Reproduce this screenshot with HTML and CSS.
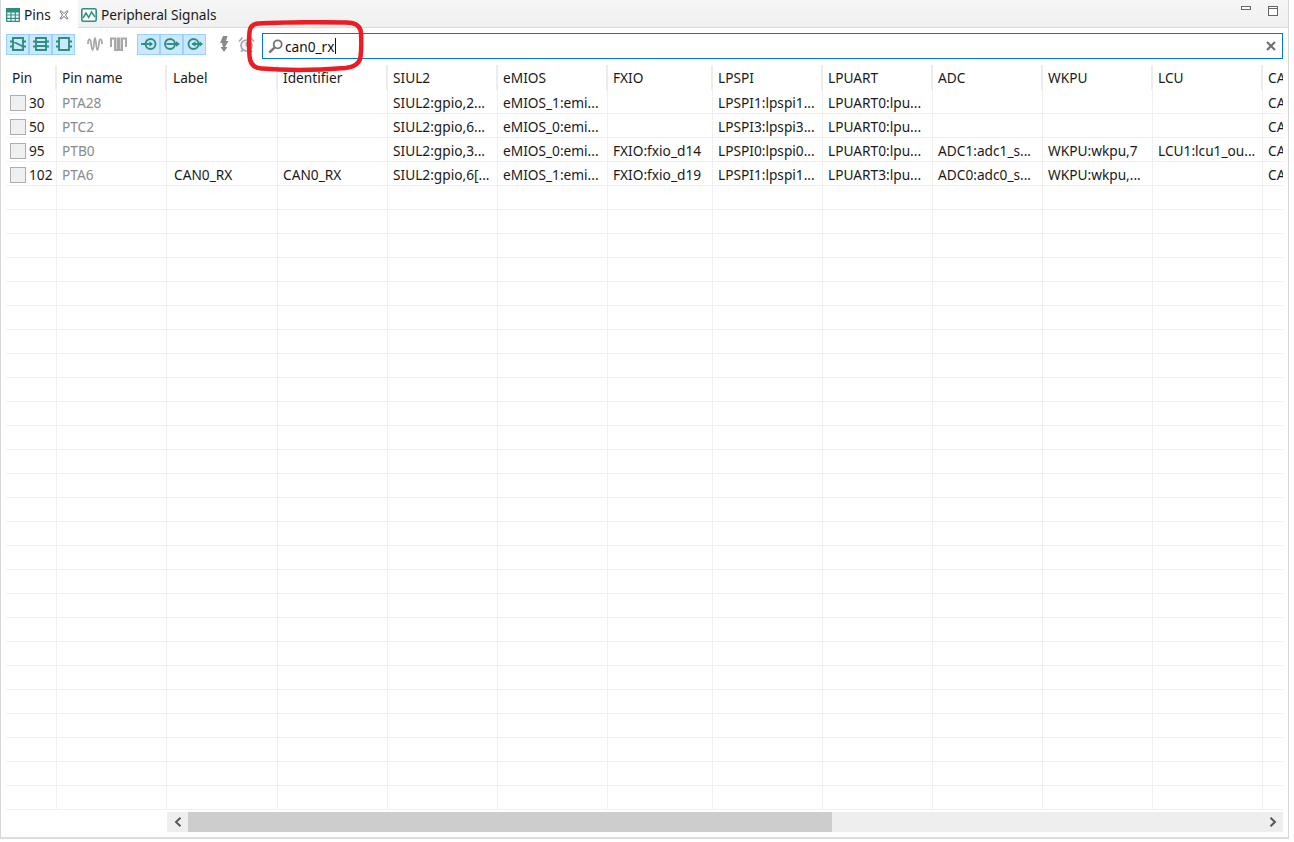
FILE: index.html
```html
<!DOCTYPE html>
<html lang="en">
<head>
<meta charset="utf-8">
<title>Pins</title>
<link rel="stylesheet" href="styles.css">
</head>
<body>
<div class="panel">
  <div class="tabstrip">
    <div class="tab tab-active">
      <svg class="tabicon" viewBox="0 0 14 14"><path d="M.7.7h12.600v12.600H.7z" fill="#fff" stroke="#2f8f7f" stroke-width="1.300"/><path d="M.7.7h12.600v3.300H.7z" fill="#2f8f7f" stroke="#2f8f7f"/><path d="M.7 7h12.600M.7 10.300h12.600M5 4v9.300M9.300 4v9.300" stroke="#2f8f7f" stroke-width="1.200" fill="none"/></svg>
      <span>Pins</span>
      <svg class="tabclose" viewBox="0 0 10 10"><path d="M1 1.500 2 .8 5 3.500 8 .8 9 1.500 6.500 5 9 8.500 8 9.200 5 6.500 2 9.200 1 8.500 3.500 5z" fill="#fff" stroke="#666" stroke-width=".9"/></svg>
    </div>
    <div class="tab">
      <svg class="tabicon tabicon-wide" viewBox="0 0 16 14"><rect x=".8" y=".8" width="14.400" height="12.400" rx="1.500" fill="#fff" stroke="#2f8f7f" stroke-width="1.600"/><path d="M2 10 5 5l2.700 4.500L10.500 4l3.500 5" fill="none" stroke="#2f8f7f" stroke-width="1.500"/></svg>
      <span>Peripheral Signals</span>
    </div>
    <div class="winbtns">
      <svg class="minbtn" viewBox="0 0 10 5"><rect x=".5" y=".5" width="9" height="3" fill="#fff" stroke="#666"/></svg>
      <svg class="maxbtn" viewBox="0 0 10 10"><rect x=".5" y=".5" width="9" height="9" fill="#fff" stroke="#666"/><path d="M.5 2.500h9" stroke="#666"/></svg>
    </div>
  </div>

  <div class="toolbar">
    <div class="toggles">
      <button class="toggle"><svg viewBox="0 0 16 14"><path d="M3 1h10v12H3zM0 4.500h3M0 9.500h3M13 4.500h3M13 9.500h3M3 4.500 13 9.500" fill="none" stroke="#2f8f7f" stroke-width="1.900"/></svg></button>
      <button class="toggle"><svg viewBox="0 0 16 14"><path d="M3 1h10v12H3zM0 4.500h3M0 9.500h3M13 4.500h3M13 9.500h3M3 5h10M3 9h10" fill="none" stroke="#2f8f7f" stroke-width="1.900"/></svg></button>
      <button class="toggle"><svg viewBox="0 0 16 14"><path d="M3 1h10v12H3zM0 4.500h3M0 9.500h3M13 4.500h3M13 9.500h3" fill="none" stroke="#2f8f7f" stroke-width="1.900"/></svg></button>
    </div>
    <svg class="wave" viewBox="0 0 16 14"><path d="M1 7C1 1 3.500 1 4 6s.8 7 1.800 7S7 1 8 1s1.200 12 2.200 12S11.500 11 12 6s3-5 3 1" fill="none" stroke="#a8a8a8" stroke-width="1.800"/></svg>
    <svg class="wave wave-square" viewBox="0 0 17 14"><path d="M1 10V1.500h4V13h2.500V1.500h2V13H12V1.500h4v8.500" fill="none" stroke="#a8a8a8" stroke-width="2"/></svg>
    <div class="toggles toggles-second">
      <button class="toggle"><svg viewBox="0 0 16 14"><circle cx="9.500" cy="7" r="5" fill="none" stroke="#2f8f7f" stroke-width="1.900"/><path d="M0 7h11" stroke="#2f8f7f" stroke-width="1.900"/><path d="M8.500 4.300 12 7 8.500 9.700z" fill="#2f8f7f"/></svg></button>
      <button class="toggle"><svg viewBox="0 0 16 14"><circle cx="6" cy="7" r="5" fill="none" stroke="#2f8f7f" stroke-width="1.900"/><path d="M2.500 7h10" stroke="#2f8f7f" stroke-width="1.900"/><path d="M12 4.300 16 7l-4 2.700z" fill="#2f8f7f"/></svg></button>
      <button class="toggle"><svg viewBox="0 0 16 14"><circle cx="6.500" cy="7" r="5" fill="none" stroke="#2f8f7f" stroke-width="1.900"/><path d="M5 7h10" stroke="#2f8f7f" stroke-width="1.900"/><path d="M8.500 4.300 4.500 7l4 2.700zM12.500 4.300 16 7l-3.500 2.700z" fill="#2f8f7f"/></svg></button>
    </div>
    <svg class="bolt" viewBox="0 0 10 16"><path d="M4 0h4.500L7 5h2.500L6 11h2.500L5 16l-3.500-5H4L3 7H1z" fill="#8a8a8a"/></svg>
    <svg class="alarm" viewBox="0 0 17 17"><circle cx="8.500" cy="9.500" r="5.500" fill="#f4f4f4" stroke="#a8a8a8" stroke-width="1.700"/><path d="M8.500 6v3.500l2 1.500M1 5.500l3.500-4M16 5.500l-3.500-4M4.500 14 3 16M12.500 14l1.500 2" fill="none" stroke="#a8a8a8" stroke-width="1.700"/></svg>
    <div class="search">
      <svg class="lens" viewBox="0 0 15 15"><circle cx="9.700" cy="5.300" r="4" fill="none" stroke="#777" stroke-width="1.800"/><path d="M6.700 8.300 1.300 13.700" stroke="#777" stroke-width="2.400"/></svg>
      <span class="query">can0_rx</span><span class="caret"></span>
      <svg class="clear" viewBox="0 0 10 10"><path d="M1 1l8 8M9 1 1 9" stroke="#6e6e6e" stroke-width="2"/></svg>
    </div>
  </div>

  <div class="tablewrap">
    <table class="pins">
      <colgroup>
        <col class="c-pin"><col class="c-w"><col class="c-x"><col class="c-w"><col class="c-w"><col class="c-w"><col class="c-n"><col class="c-w"><col class="c-w"><col class="c-w"><col class="c-w"><col class="c-w"><col class="c-end">
      </colgroup>
      <thead>
        <tr><th>Pin</th><th>Pin name</th><th>Label</th><th>Identifier</th><th>SIUL2</th><th>eMIOS</th><th>FXIO</th><th>LPSPI</th><th>LPUART</th><th>ADC</th><th>WKPU</th><th>LCU</th><th>CAN</th></tr>
      </thead>
      <tbody>
        <tr><td class="pin"><span class="check"></span>30</td><td class="name">PTA28</td><td></td><td></td><td>SIUL2:gpio,2...</td><td>eMIOS_1:emi...</td><td></td><td>LPSPI1:lpspi1...</td><td>LPUART0:lpu...</td><td></td><td></td><td></td><td>CAN</td></tr>
        <tr><td class="pin"><span class="check"></span>50</td><td class="name">PTC2</td><td></td><td></td><td>SIUL2:gpio,6...</td><td>eMIOS_0:emi...</td><td></td><td>LPSPI3:lpspi3...</td><td>LPUART0:lpu...</td><td></td><td></td><td></td><td>CAN</td></tr>
        <tr><td class="pin"><span class="check"></span>95</td><td class="name">PTB0</td><td></td><td></td><td>SIUL2:gpio,3...</td><td>eMIOS_0:emi...</td><td>FXIO:fxio_d14</td><td>LPSPI0:lpspi0...</td><td>LPUART0:lpu...</td><td>ADC1:adc1_s...</td><td>WKPU:wkpu,7</td><td>LCU1:lcu1_ou...</td><td>CAN</td></tr>
        <tr><td class="pin"><span class="check"></span>102</td><td class="name">PTA6</td><td class="label">CAN0_RX</td><td>CAN0_RX</td><td>SIUL2:gpio,6[...</td><td>eMIOS_1:emi...</td><td>FXIO:fxio_d19</td><td>LPSPI1:lpspi1...</td><td>LPUART3:lpu...</td><td>ADC0:adc0_s...</td><td>WKPU:wkpu,...</td><td></td><td>CAN</td></tr>
        <tr><td></td><td></td><td></td><td></td><td></td><td></td><td></td><td></td><td></td><td></td><td></td><td></td><td></td></tr>
        <tr><td></td><td></td><td></td><td></td><td></td><td></td><td></td><td></td><td></td><td></td><td></td><td></td><td></td></tr>
        <tr><td></td><td></td><td></td><td></td><td></td><td></td><td></td><td></td><td></td><td></td><td></td><td></td><td></td></tr>
        <tr><td></td><td></td><td></td><td></td><td></td><td></td><td></td><td></td><td></td><td></td><td></td><td></td><td></td></tr>
        <tr><td></td><td></td><td></td><td></td><td></td><td></td><td></td><td></td><td></td><td></td><td></td><td></td><td></td></tr>
        <tr><td></td><td></td><td></td><td></td><td></td><td></td><td></td><td></td><td></td><td></td><td></td><td></td><td></td></tr>
        <tr><td></td><td></td><td></td><td></td><td></td><td></td><td></td><td></td><td></td><td></td><td></td><td></td><td></td></tr>
        <tr><td></td><td></td><td></td><td></td><td></td><td></td><td></td><td></td><td></td><td></td><td></td><td></td><td></td></tr>
        <tr><td></td><td></td><td></td><td></td><td></td><td></td><td></td><td></td><td></td><td></td><td></td><td></td><td></td></tr>
        <tr><td></td><td></td><td></td><td></td><td></td><td></td><td></td><td></td><td></td><td></td><td></td><td></td><td></td></tr>
        <tr><td></td><td></td><td></td><td></td><td></td><td></td><td></td><td></td><td></td><td></td><td></td><td></td><td></td></tr>
        <tr><td></td><td></td><td></td><td></td><td></td><td></td><td></td><td></td><td></td><td></td><td></td><td></td><td></td></tr>
        <tr><td></td><td></td><td></td><td></td><td></td><td></td><td></td><td></td><td></td><td></td><td></td><td></td><td></td></tr>
        <tr><td></td><td></td><td></td><td></td><td></td><td></td><td></td><td></td><td></td><td></td><td></td><td></td><td></td></tr>
        <tr><td></td><td></td><td></td><td></td><td></td><td></td><td></td><td></td><td></td><td></td><td></td><td></td><td></td></tr>
        <tr><td></td><td></td><td></td><td></td><td></td><td></td><td></td><td></td><td></td><td></td><td></td><td></td><td></td></tr>
        <tr><td></td><td></td><td></td><td></td><td></td><td></td><td></td><td></td><td></td><td></td><td></td><td></td><td></td></tr>
        <tr><td></td><td></td><td></td><td></td><td></td><td></td><td></td><td></td><td></td><td></td><td></td><td></td><td></td></tr>
        <tr><td></td><td></td><td></td><td></td><td></td><td></td><td></td><td></td><td></td><td></td><td></td><td></td><td></td></tr>
        <tr><td></td><td></td><td></td><td></td><td></td><td></td><td></td><td></td><td></td><td></td><td></td><td></td><td></td></tr>
        <tr><td></td><td></td><td></td><td></td><td></td><td></td><td></td><td></td><td></td><td></td><td></td><td></td><td></td></tr>
        <tr><td></td><td></td><td></td><td></td><td></td><td></td><td></td><td></td><td></td><td></td><td></td><td></td><td></td></tr>
        <tr><td></td><td></td><td></td><td></td><td></td><td></td><td></td><td></td><td></td><td></td><td></td><td></td><td></td></tr>
        <tr><td></td><td></td><td></td><td></td><td></td><td></td><td></td><td></td><td></td><td></td><td></td><td></td><td></td></tr>
        <tr><td></td><td></td><td></td><td></td><td></td><td></td><td></td><td></td><td></td><td></td><td></td><td></td><td></td></tr>
        <tr><td></td><td></td><td></td><td></td><td></td><td></td><td></td><td></td><td></td><td></td><td></td><td></td><td></td></tr>
      </tbody>
    </table>
  </div>

  <div class="hscroll">
    <div class="arrow"><svg viewBox="0 0 8 10"><path d="M6.500 .8 2 5l4.500 4.200" fill="none" stroke="#555" stroke-width="1.900"/></svg></div>
    <div class="thumb"></div>
    <div class="arrow arrow-right"><svg viewBox="0 0 8 10"><path d="M1.500 .8 6 5 1.500 9.200" fill="none" stroke="#555" stroke-width="1.900"/></svg></div>
  </div>
</div>

<svg class="annotation" viewBox="0 0 120 54"><path d="M12 3.500C40 2 70 2 100 2.500c9 0 14.500 3 15 10.500.5 9 .5 17-.5 24-1 7-6 10-15 11-25 2-60 2.500-84 .5C8 48 4 44 3.500 36 3 27 3 18 3.500 12 4 6 7 4 12 3.500z" fill="none" stroke="#ed1c24" stroke-width="4.500"/></svg>
</body>
</html>
```
FILE: styles.css
```css
* { box-sizing: border-box; }
html, body { margin: 0; height: 100%; background: #fff; }
body {
  position: relative;
  font-family: "Noto Sans", "Open Sans", sans-serif;
  font-size: 13.7px;
  color: #1a1a1a;
  overflow: hidden;
}
.panel {
  width: 1289px;
  height: 839px;
  border-left: 1px solid #d8d8d8;
  border-right: 1px solid #d8d8d8;
  border-bottom: 2px solid #dcdcdc;
  display: flex;
  flex-direction: column;
  background: #fff;
}
.tabstrip {
  height: 28px;
  flex: none;
  display: flex;
  align-items: stretch;
  background: linear-gradient(#f6f6f6, #f0f0f0);
  border-bottom: 1px solid #dcdcdc;
}
.tab {
  display: flex;
  align-items: center;
  padding: 2px 0 0 5px;
  gap: 4px;
  line-height: 1;
}
.tab-active {
  width: 77px;
  background: #fff;
  height: 28px;
}
.tabicon { width: 14px; height: 14px; flex: none; }
.tabicon-wide { width: 16px; }
.tabclose { width: 10px; height: 10px; margin-left: 4px; flex: none; }
.tab-active + .tab { padding-left: 3px; gap: 4px; }
.winbtns {
  margin-left: auto;
  display: flex;
  align-items: flex-start;
  gap: 17px;
  padding: 6px 10px 0 0;
}
.minbtn { width: 10px; height: 5px; }
.maxbtn { width: 10px; height: 10px; }
.toolbar {
  height: 37px;
  flex: none;
  display: flex;
  align-items: center;
  padding: 0 5px 0 5px;
}
.toggles { display: flex; height: 21px; margin-top: -5px; }
.toggle {
  width: 23px;
  height: 21px;
  padding: 0;
  margin: 0;
  background: #cce8ff;
  border: 1px solid #99d1ff;
  display: flex;
  align-items: center;
  justify-content: center;
}
.toggle svg { width: 16px; height: 14px; }
.wave { width: 16px; height: 14px; margin: -5px 0 0 12px; flex: none; }
.wave-square { width: 17px; margin-left: 7px; }
.toggles-second { margin-left: 10px; }
.bolt { width: 10px; height: 16px; margin: -5px 0 0 13px; flex: none; }
.alarm { width: 17px; height: 17px; margin: -5px 0 0 9px; flex: none; }
.search {
  flex: 1;
  height: 26px;
  margin: -1px 0 0 7px;
  border: 1px solid #0078d7;
  display: flex;
  align-items: center;
  padding: 0 5px;
}
.lens { width: 15px; height: 15px; flex: none; }
.query { margin-left: 2px; color: #111; }
.caret { width: 1px; height: 16px; background: #111; }
.clear { width: 10px; height: 10px; margin-left: auto; margin-right: 1px; flex: none; }
.tablewrap {
  height: 745px;
  flex: none;
  padding-left: 5px;
  width: 1282px;
  overflow: hidden;
}
.pins {
  table-layout: fixed;
  border-collapse: separate;
  border-spacing: 0;
  width: 1277px;
}
.c-pin { width: 51px; }
.c-w { width: 110px; }
.c-x { width: 111px; }
.c-n { width: 105px; }
.c-end { width: 20px; }
th {
  height: 25px;
  padding: 0 0 0 5px;
  font-weight: 400;
  text-align: left;
  white-space: nowrap;
  overflow: hidden;
  border-right: 2px solid #ececec;
}
th:first-child { padding-left: 6px; }
th:nth-child(3) { padding-left: 6px; }
th:last-child { border-right: 0; }
td {
  height: 24px;
  padding: 2px 0 0 5px;
  white-space: nowrap;
  overflow: hidden;
  border-right: 1px solid #f0f0f0;
  border-bottom: 1px solid #f0f0f0;
  line-height: 21px;
}
td:last-child { border-right: 0; }
td.pin { padding-left: 4px; }
td.label { padding-left: 7px; }
.check {
  display: inline-block;
  width: 16px;
  height: 16px;
  margin-right: 3px;
  vertical-align: -3px;
  background: #f0f0f0;
  border: 1px solid #adadad;
}
.name { color: #8b8b8b; }
.hscroll {
  height: 20px;
  width: 1116px;
  margin: 2px 0 0 166px;
  flex: none;
  display: flex;
  background: #eeeeee;
}
.arrow {
  width: 21px;
  flex: none;
  display: flex;
  align-items: center;
  justify-content: center;
}
.arrow svg { width: 8px; height: 10px; }
.arrow-right { margin-left: auto; }
.thumb { width: 644px; background: #cdcdcd; }
.annotation {
  position: absolute;
  left: 246px;
  top: 20px;
  width: 120px;
  height: 54px;
}
```
